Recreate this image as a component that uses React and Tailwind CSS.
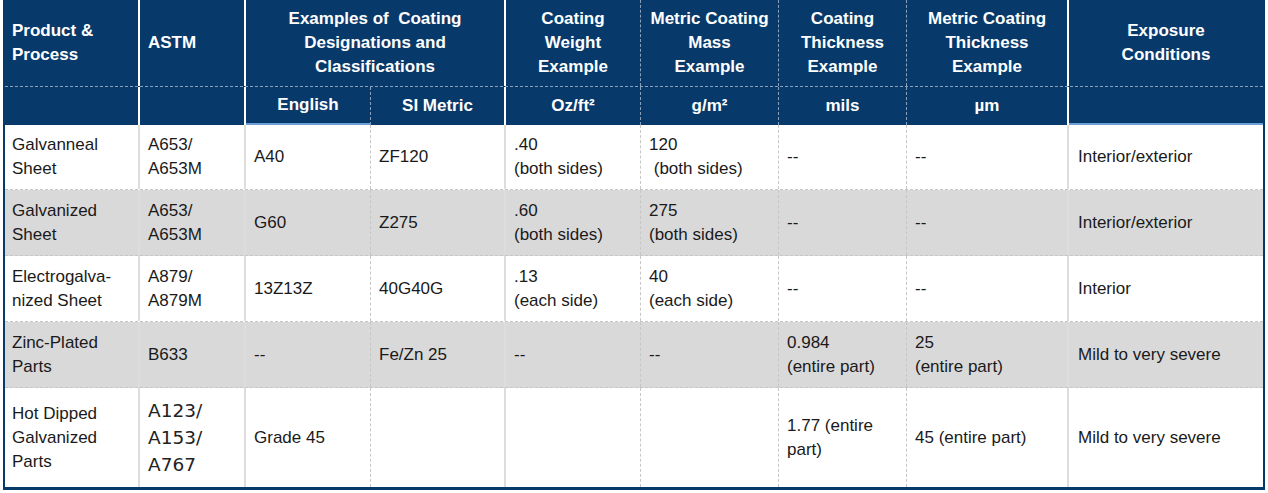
import React from "react";

const cols =
  "grid grid-cols-[135px_106px_125px_135px_135px_138px_128px_162px_194px]";

// right-hand separators, header and body
const headSolid = "border-r-2 border-white";
const headDash = "border-r border-dashed border-[#8ba1ba]";
const bodySolid = "border-r-2 border-[#dddddd]";
const bodyDash = "border-r border-dashed border-[#c6c6c6]";

const bodyBorders = [
  bodySolid,
  bodySolid,
  bodyDash,
  bodySolid,
  bodyDash,
  bodyDash,
  bodyDash,
  bodySolid,
  "",
];

const rows = [
  {
    bg: "bg-white",
    h: "h-[65px]",
    cells: [
      ["Galvanneal", "Sheet"],
      ["A653/", "A653M"],
      ["A40"],
      ["ZF120"],
      [".40", "(both sides)"],
      ["120", "\u00a0(both sides)"],
      ["--"],
      ["--"],
      ["Interior/exterior"],
    ],
  },
  {
    bg: "bg-[#d9d9d9]",
    h: "h-[66px]",
    cells: [
      ["Galvanized", "Sheet"],
      ["A653/", "A653M"],
      ["G60"],
      ["Z275"],
      [".60", "(both sides)"],
      ["275", "(both sides)"],
      ["--"],
      ["--"],
      ["Interior/exterior"],
    ],
  },
  {
    bg: "bg-white",
    h: "h-[66px]",
    cells: [
      ["Electrogalva-", "nized Sheet"],
      ["A879/", "A879M"],
      ["13Z13Z"],
      ["40G40G"],
      [".13", "(each side)"],
      ["40", "(each side)"],
      ["--"],
      ["--"],
      ["Interior"],
    ],
  },
  {
    bg: "bg-[#d9d9d9]",
    h: "h-[66px]",
    cells: [
      ["Zinc-Plated", "Parts"],
      ["B633"],
      ["--"],
      ["Fe/Zn 25"],
      ["--"],
      ["--"],
      ["0.984", "(entire part)"],
      ["25", "(entire part)"],
      ["Mild to very severe"],
    ],
  },
  {
    bg: "bg-white",
    h: "h-[99px]",
    last: true,
    cells: [
      ["Hot Dipped", "Galvanized", "Parts"],
      ["A123/", "A153/", "A767"],
      ["Grade 45"],
      [""],
      [""],
      [""],
      ["1.77 (entire part)"],
      ["45 (entire part)"],
      ["Mild to very severe"],
    ],
  },
];

const Lines = ({ lines }) =>
  lines.map((l, i) => (
    <div key={i} className="whitespace-pre-wrap">
      {l}
    </div>
  ));

export default function App() {
  return (
    <div className="bg-white w-[1268px] h-[493px] pl-[3px] font-['Liberation_Sans',Arial,sans-serif]">
      <div className="w-[1262px] border-x-2 border-b-[3px] border-[#073a6b]">
        {/* header, top band */}
        <div
          className={`${cols} h-[87px] bg-[#073a6b] text-white font-bold text-[17px] leading-[24px] border-b border-dashed border-[#8ba1ba]`}
        >
          <div className={`${headSolid} flex flex-col justify-center px-[7px]`}>
            <Lines lines={["Product &", "Process"]} />
          </div>
          <div className={`${headSolid} flex flex-col justify-center px-2`}>ASTM</div>
          <div
            className={`${headSolid} col-span-2 flex flex-col items-center justify-center text-center`}
          >
            <Lines
              lines={["Examples of  Coating", "Designations and", "Classifications"]}
            />
          </div>
          <div className={`${headDash} flex flex-col items-center justify-center text-center`}>
            <Lines lines={["Coating", "Weight", "Example"]} />
          </div>
          <div className={`${headDash} flex flex-col items-center justify-center text-center`}>
            <Lines lines={["Metric Coating", "Mass", "Example"]} />
          </div>
          <div className={`${headDash} flex flex-col items-center justify-center text-center`}>
            <Lines lines={["Coating", "Thickness", "Example"]} />
          </div>
          <div className={`${headSolid} flex flex-col items-center justify-center text-center`}>
            <Lines lines={["Metric Coating", "Thickness", "Example"]} />
          </div>
          <div className="flex flex-col items-center justify-center text-center">
            <Lines lines={["Exposure", "Conditions"]} />
          </div>
        </div>

        {/* header, units band */}
        <div
          className={`${cols} h-[38px] bg-[#073a6b] text-white font-bold text-[17px] leading-[24px]`}
        >
          <div className={headSolid} />
          <div className={headSolid} />
          <div
            className={`${headDash} flex items-center justify-center border-b-2 border-b-[#6d9fd6] [border-bottom-style:solid]`}
          >
            English
          </div>
          <div className={`${headSolid} flex items-center justify-center`}>SI Metric</div>
          <div className={`${headDash} flex items-center justify-center`}>Oz/ft²</div>
          <div className={`${headDash} flex items-center justify-center`}>g/m²</div>
          <div className={`${headDash} flex items-center justify-center`}>mils</div>
          <div className={`${headSolid} flex items-center justify-center`}>µm</div>
          <div className="border-b-2 border-b-[#6d9fd6]" />
        </div>

        {/* body */}
        {rows.map((row, r) => (
          <div
            key={r}
            className={`${cols} ${row.h} ${row.bg} text-[17px] leading-[24px] text-[#1a1a1a] ${
              row.last ? "" : "border-b border-dashed border-[#c6c6c6]"
            }`}
          >
            {row.cells.map((lines, c) => (
              <div
                key={c}
                className={`${bodyBorders[c]} flex flex-col justify-center ${
                  c === 0 ? "pl-[7px] pr-1" : c === 8 ? "pl-[9px] pr-1" : "px-2"
                } ${
                  row.last && c === 1
                    ? "font-['DejaVu_Sans',sans-serif] text-[18.5px] leading-[27px] text-[#222]"
                    : ""
                }`}
              >
                <Lines lines={lines} />
              </div>
            ))}
          </div>
        ))}
      </div>
    </div>
  );
}
